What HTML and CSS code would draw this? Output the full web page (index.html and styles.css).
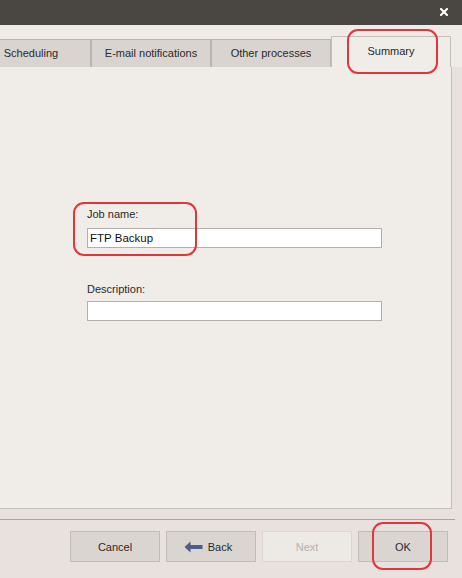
FILE: index.html
```html
<!DOCTYPE html>
<html lang="en">
<head>
  <meta charset="UTF-8" />
  <meta name="viewport" content="width=device-width, initial-scale=1.0">
  <title>Job wizard - Summary</title>

  <link rel="stylesheet" href="styles.css">
</head>
<body>
  <div class="window">
    <div class="titlebar">
      <svg class="close-icon" width="8" height="8" viewBox="0 0 8 8">
        <path d="M1 1 L7 7 M7 1 L1 7" stroke="#fff" stroke-width="2" stroke-linecap="square" />
      </svg>
    </div>

    <div class="tabs">
      <div class="tab">Scheduling</div>
      <div class="tab">E-mail notifications</div>
      <div class="tab">Other processes</div>
      <div class="tab active">Summary</div>
    </div>

    <div class="panel">
      <div class="form">
        <label class="field-label">Job name:</label>
        <div class="text-input">FTP Backup</div>

        <label class="field-label second">Description:</label>
        <div class="text-input"></div>
      </div>
    </div>

    <div class="footer">
      <button class="btn">Cancel</button>
      <button class="btn">
        <svg class="back-arrow" width="19" height="12" viewBox="0 0 19 12">
          <path d="M0.5 6 L6.5 0.5 L6.5 4 L18.5 4 L18.5 8 L6.5 8 L6.5 11.5 Z" fill="#4b5f8e" />
        </svg>
        Back
      </button>
      <button class="btn disabled">Next</button>
      <button class="btn">OK</button>
    </div>

    <!-- highlight marks drawn over the screenshot -->
    <div class="mark mark-tab"></div>
    <div class="mark mark-name"></div>
    <div class="mark mark-ok"></div>
  </div>
</body>
</html>
```

FILE: styles.css
```css
* {
  box-sizing: border-box;
  margin: 0;
  padding: 0;
}

body {
  font-family: 'Liberation Sans', Arial, sans-serif;
  font-size: 11px;
  color: #1e1e1e;
  background-color: #e8e1dd;
}

.window {
  position: relative;
  width: 462px;
  height: 578px;
  overflow: hidden;
  background-color: #e8e1dd;
}

.titlebar {
  height: 25px;
  background-color: #4a4743;
  display: flex;
  align-items: center;
  justify-content: flex-end;
  padding-right: 14px;
  padding-bottom: 1px;
}

.tabs {
  display: flex;
  align-items: flex-end;
  height: 42px;
  margin-left: -29px;
  margin-bottom: -1px;
  background-color: #efebe7;
  position: relative;
  z-index: 1;
}

.tab {
  width: 120px;
  height: 28px;
  display: flex;
  align-items: center;
  justify-content: center;
  padding-bottom: 2px;
  background-color: #d9d4d0;
  border: 1px solid #b9b4b0;
  border-bottom: none;
  color: #2a2a2a;
}

.tab.active {
  width: 120px;
  height: 31px;
  background-color: #f0ece8;
  border-color: #c4bfbb;
  padding-bottom: 3px;
}

.panel {
  width: 454px;
  height: 443px;
  margin-left: -2px;
  background-color: #f0ece8;
  border: 1px solid #c4bfbb;
  padding-top: 141px;
  padding-left: 88px;
}

.form {
  width: 295px;
}

.field-label {
  display: block;
  line-height: 13px;
  margin-bottom: 7px;
  color: #2a2a2a;
}

.field-label.second {
  margin-top: 35px;
  margin-bottom: 5px;
}

.text-input {
  height: 20px;
  background-color: #fff;
  border: 1px solid #b4afab;
  padding-left: 2px;
  line-height: 18px;
  font-size: 11.5px;
  color: #111;
}

.footer {
  margin-top: 10px;
  width: 455px;
  border-top: 1px solid #aaa5a1;
  padding-top: 11px;
  padding-right: 7px;
  display: flex;
  justify-content: flex-end;
  gap: 6px;
}

.btn {
  width: 90px;
  height: 31px;
  font-family: 'Liberation Sans', Arial, sans-serif;
  font-size: 11px;
  color: #2a2a2a;
  background-color: #dbd5d1;
  border: 1px solid #c2bcb8;
  display: flex;
  align-items: center;
  justify-content: center;
  gap: 5px;
}

.btn.disabled {
  background-color: #ede9e5;
  border-color: #dcd7d3;
  color: #b6b1ad;
}

.back-arrow {
  margin-left: -6px;
}

/* Red annotation marks */
.mark {
  position: absolute;
  border: 2px solid #e0373d;
  border-radius: 11px;
  z-index: 5;
}

.mark-tab {
  left: 347px;
  top: 29px;
  width: 91px;
  height: 45px;
}

.mark-name {
  left: 73px;
  top: 202px;
  width: 124px;
  height: 54px;
}

.mark-ok {
  left: 372px;
  top: 522px;
  width: 60px;
  height: 48px;
}
```
